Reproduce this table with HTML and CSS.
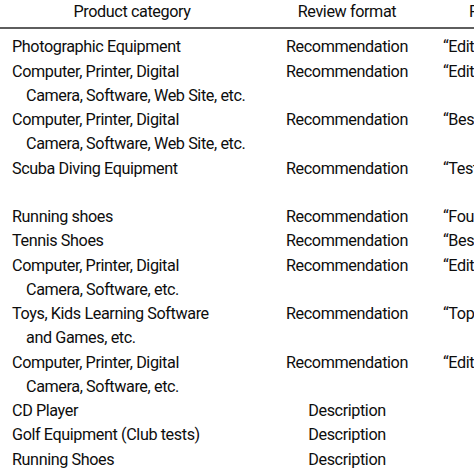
FILE: index.html
```html
<!DOCTYPE html>
<html lang="en">
<head>
<meta charset="utf-8">
<title>Product reviews</title>
<link rel="stylesheet" href="styles.css">
</head>
<body>
<div class="frame">
<table class="reviews">
  <colgroup>
    <col class="c-cat">
    <col class="c-fmt">
    <col class="c-src">
  </colgroup>
  <thead>
    <tr>
      <th class="h-cat">Product category</th>
      <th class="h-fmt">Review format</th>
      <th class="h-src">Review label</th>
    </tr>
  </thead>
  <tbody>
    <tr class="first">
      <td class="cat">Photographic Equipment</td>
      <td class="fmt">Recommendation</td>
      <td class="src">“Editors’ Choice”</td>
    </tr>
    <tr>
      <td class="cat">Computer, Printer, Digital<br>Camera, Software, Web Site, etc.</td>
      <td class="fmt">Recommendation</td>
      <td class="src">“Editors’ Choice”</td>
    </tr>
    <tr>
      <td class="cat">Computer, Printer, Digital<br>Camera, Software, Web Site, etc.</td>
      <td class="fmt">Recommendation</td>
      <td class="src">“Best Buy”</td>
    </tr>
    <tr class="gap">
      <td class="cat">Scuba Diving Equipment</td>
      <td class="fmt">Recommendation</td>
      <td class="src">“Tested”</td>
    </tr>
    <tr>
      <td class="cat">Running shoes</td>
      <td class="fmt">Recommendation</td>
      <td class="src">“Four Star”</td>
    </tr>
    <tr>
      <td class="cat">Tennis Shoes</td>
      <td class="fmt">Recommendation</td>
      <td class="src">“Best Buy”</td>
    </tr>
    <tr>
      <td class="cat">Computer, Printer, Digital<br>Camera, Software, etc.</td>
      <td class="fmt">Recommendation</td>
      <td class="src">“Editors’ Choice”</td>
    </tr>
    <tr>
      <td class="cat">Toys, Kids Learning Software<br>and Games, etc.</td>
      <td class="fmt">Recommendation</td>
      <td class="src">“Top Pick”</td>
    </tr>
    <tr>
      <td class="cat">Computer, Printer, Digital<br>Camera, Software, etc.</td>
      <td class="fmt">Recommendation</td>
      <td class="src">“Editors’ Choice”</td>
    </tr>
    <tr>
      <td class="cat">CD Player</td>
      <td class="fmt">Description</td>
      <td class="src"></td>
    </tr>
    <tr>
      <td class="cat">Golf Equipment (Club tests)</td>
      <td class="fmt">Description</td>
      <td class="src"></td>
    </tr>
    <tr>
      <td class="cat">Running Shoes</td>
      <td class="fmt">Description</td>
      <td class="src"></td>
    </tr>
  </tbody>
</table>
</div>
</body>
</html>
```

FILE: styles.css
```css
html, body {
  margin: 0;
  padding: 0;
  background: #ffffff;
  overflow: hidden;
}

.frame {
  width: 474px;
  height: 474px;
  overflow: hidden;
}

.reviews {
  border-collapse: collapse;
  table-layout: fixed;
  width: 640px;
  font-family: Roboto, "Liberation Sans", sans-serif;
  font-size: 16.2px;
  letter-spacing: -0.4px;
  line-height: 24.25px;
  color: #0d0d0d;
}

.c-cat { width: 264px; }
.c-fmt { width: 166px; }
.c-src { width: 210px; }

.reviews th {
  font-weight: normal;
  padding: 0 0 2.25px 0;
  border-bottom: 2px solid #5e5e5e;
  white-space: nowrap;
}

.h-cat, .h-fmt { text-align: center; }
.h-src { text-align: left; padding-left: 39px !important; }

.reviews td {
  padding: 0;
  vertical-align: top;
  white-space: nowrap;
}

.cat {
  padding-left: 26px !important;
  text-indent: -14px;
}

.fmt { text-align: center; }

.src {
  text-align: left;
  padding-left: 13px !important;
}

.first td { padding-top: 6.8px; }
.gap td { padding-bottom: 24.25px; }
```
